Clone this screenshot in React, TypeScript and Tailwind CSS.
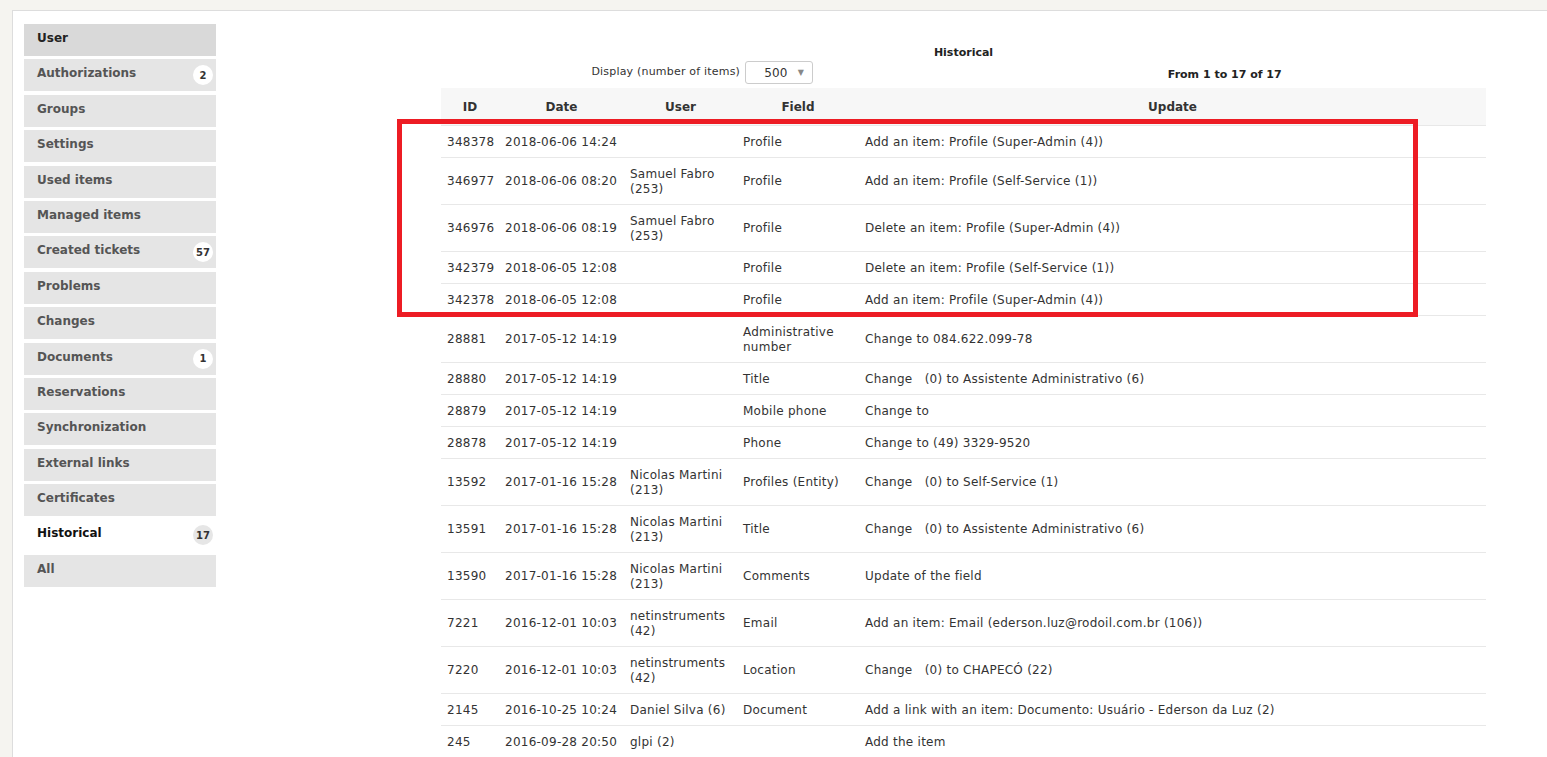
import React from 'react'

type Tab = { label: string; badge?: string; active?: boolean; first?: boolean }

const tabs: Tab[] = [
  { label: 'User', first: true },
  { label: 'Authorizations', badge: '2' },
  { label: 'Groups' },
  { label: 'Settings' },
  { label: 'Used items' },
  { label: 'Managed items' },
  { label: 'Created tickets', badge: '57' },
  { label: 'Problems' },
  { label: 'Changes' },
  { label: 'Documents', badge: '1' },
  { label: 'Reservations' },
  { label: 'Synchronization' },
  { label: 'External links' },
  { label: 'Certificates' },
  { label: 'Historical', badge: '17', active: true },
  { label: 'All' },
]

type Row = { id: string; date: string; user: string[]; field: string[]; update: string }

const rows: Row[] = [
  { id: '348378', date: '2018-06-06 14:24', user: [], field: ['Profile'], update: 'Add an item: Profile (Super-Admin (4))' },
  { id: '346977', date: '2018-06-06 08:20', user: ['Samuel Fabro', '(253)'], field: ['Profile'], update: 'Add an item: Profile (Self-Service (1))' },
  { id: '346976', date: '2018-06-06 08:19', user: ['Samuel Fabro', '(253)'], field: ['Profile'], update: 'Delete an item: Profile (Super-Admin (4))' },
  { id: '342379', date: '2018-06-05 12:08', user: [], field: ['Profile'], update: 'Delete an item: Profile (Self-Service (1))' },
  { id: '342378', date: '2018-06-05 12:08', user: [], field: ['Profile'], update: 'Add an item: Profile (Super-Admin (4))' },
  { id: '28881', date: '2017-05-12 14:19', user: [], field: ['Administrative', 'number'], update: 'Change to 084.622.099-78' },
  { id: '28880', date: '2017-05-12 14:19', user: [], field: ['Title'], update: 'Change\u00a0\u00a0\u00a0(0) to Assistente Administrativo (6)' },
  { id: '28879', date: '2017-05-12 14:19', user: [], field: ['Mobile phone'], update: 'Change to' },
  { id: '28878', date: '2017-05-12 14:19', user: [], field: ['Phone'], update: 'Change to (49) 3329-9520' },
  { id: '13592', date: '2017-01-16 15:28', user: ['Nicolas Martini', '(213)'], field: ['Profiles (Entity)'], update: 'Change\u00a0\u00a0\u00a0(0) to Self-Service (1)' },
  { id: '13591', date: '2017-01-16 15:28', user: ['Nicolas Martini', '(213)'], field: ['Title'], update: 'Change\u00a0\u00a0\u00a0(0) to Assistente Administrativo (6)' },
  { id: '13590', date: '2017-01-16 15:28', user: ['Nicolas Martini', '(213)'], field: ['Comments'], update: 'Update of the field' },
  { id: '7221', date: '2016-12-01 10:03', user: ['netinstruments', '(42)'], field: ['Email'], update: 'Add an item: Email (ederson.luz@rodoil.com.br (106))' },
  { id: '7220', date: '2016-12-01 10:03', user: ['netinstruments', '(42)'], field: ['Location'], update: 'Change\u00a0\u00a0\u00a0(0) to CHAPECÓ (22)' },
  { id: '2145', date: '2016-10-25 10:24', user: ['Daniel Silva (6)'], field: ['Document'], update: 'Add a link with an item: Documento: Usuário - Ederson da Luz (2)' },
  { id: '245', date: '2016-09-28 20:50', user: ['glpi (2)'], field: [], update: 'Add the item' },
]

function Lines({ lines }: { lines: string[] }) {
  return (
    <>
      {lines.map((l, i) => (
        <div key={i} className="whitespace-nowrap">{l}</div>
      ))}
    </>
  )
}

export default function App() {
  return (
    <div
      className="relative h-[757px] overflow-hidden bg-[#f5f4f0] pt-[10px] pl-[12px] text-[#333]"
      style={{ fontFamily: '"DejaVu Sans", Verdana, sans-serif' }}
    >
      <div className="flex h-full border-t border-l border-[#dddddd] bg-white pl-[11px] pt-[13px]">
        {/* Sidebar tabs */}
        <div className="flex w-[192px] shrink-0 flex-col gap-[3.4px]">
          {tabs.map((t) => (
            <div
              key={t.label}
              className={`relative h-[32px] px-[13px] pt-[7px] text-[12px] font-bold leading-[15px] ${
                t.active
                  ? 'bg-white text-[#111]'
                  : t.first
                  ? 'bg-[#d9d9d9] text-[#222]'
                  : 'bg-[#e5e5e5] text-[#555]'
              }`}
            >
              {t.label}
              {t.badge && (
                <span
                  className={`absolute right-[3px] top-[6px] flex h-[20px] w-[20px] items-center justify-center rounded-full text-[10px] font-bold text-[#333] ${
                    t.active ? 'bg-[#e6e6e6]' : 'bg-white'
                  }`}
                >
                  {t.badge}
                </span>
              )}
            </div>
          ))}
        </div>

        {/* Historical content */}
        <div className="ml-[225px] w-[1045px] shrink-0 pt-[20px]">
          <div className="pt-[2px] text-center text-[11px] font-bold leading-[14px] text-[#222]">Historical</div>
          <div className="flex h-[28px]">
            <div className="flex w-1/2 items-center justify-center gap-[5px] pb-[3px] text-[11px] tracking-[0.2px] text-[#333]">
              <span>Display (number of items)</span>
              <div className="flex h-[23px] w-[68px] items-center rounded-[3px] border border-[#cccccc] bg-white pl-[18px] pr-[8px] text-[12px]">
                <span className="flex-1">500</span>
                <span className="text-[8px] text-[#888]">▼</span>
              </div>
            </div>
            <div className="flex w-1/2 items-center justify-center pt-[3px] text-[11px] font-bold text-[#222]">
              From 1 to 17 of 17
            </div>
          </div>

          <table className="w-full table-fixed border-collapse text-[12px] leading-[15px] tracking-[0.25px]">
            <colgroup>
              <col className="w-[58px]" />
              <col className="w-[125px]" />
              <col className="w-[113px]" />
              <col className="w-[122px]" />
              <col />
            </colgroup>
            <thead>
              <tr className="h-[37px] bg-[#f7f7f7] text-[12px] font-bold tracking-normal text-[#333]">
                <th className="pt-[3px] text-center">ID</th>
                <th className="pt-[3px] text-center">Date</th>
                <th className="pt-[3px] text-center">User</th>
                <th className="pt-[3px] text-center">Field</th>
                <th className="pt-[3px] text-center">Update</th>
              </tr>
            </thead>
            <tbody>
              {rows.map((r) => (
                <tr key={r.id} className="border-t border-[#e8e8e8]">
                  <td className="px-[6px] pt-[9px] pb-[7px] align-middle whitespace-nowrap">{r.id}</td>
                  <td className="px-[6px] pt-[9px] pb-[7px] align-middle whitespace-nowrap">{r.date}</td>
                  <td className="px-[6px] pt-[9px] pb-[7px] align-middle"><Lines lines={r.user} /></td>
                  <td className="px-[6px] pt-[9px] pb-[7px] align-middle"><Lines lines={r.field} /></td>
                  <td className="px-[6px] pt-[9px] pb-[7px] align-middle whitespace-nowrap">{r.update}</td>
                </tr>
              ))}
            </tbody>
          </table>
        </div>
      </div>

      {/* Red highlight annotation */}
      <div className="pointer-events-none absolute left-[397px] top-[119px] h-[198px] w-[1021px] border-[5px] border-[#ed1c24]" />
    </div>
  )
}
